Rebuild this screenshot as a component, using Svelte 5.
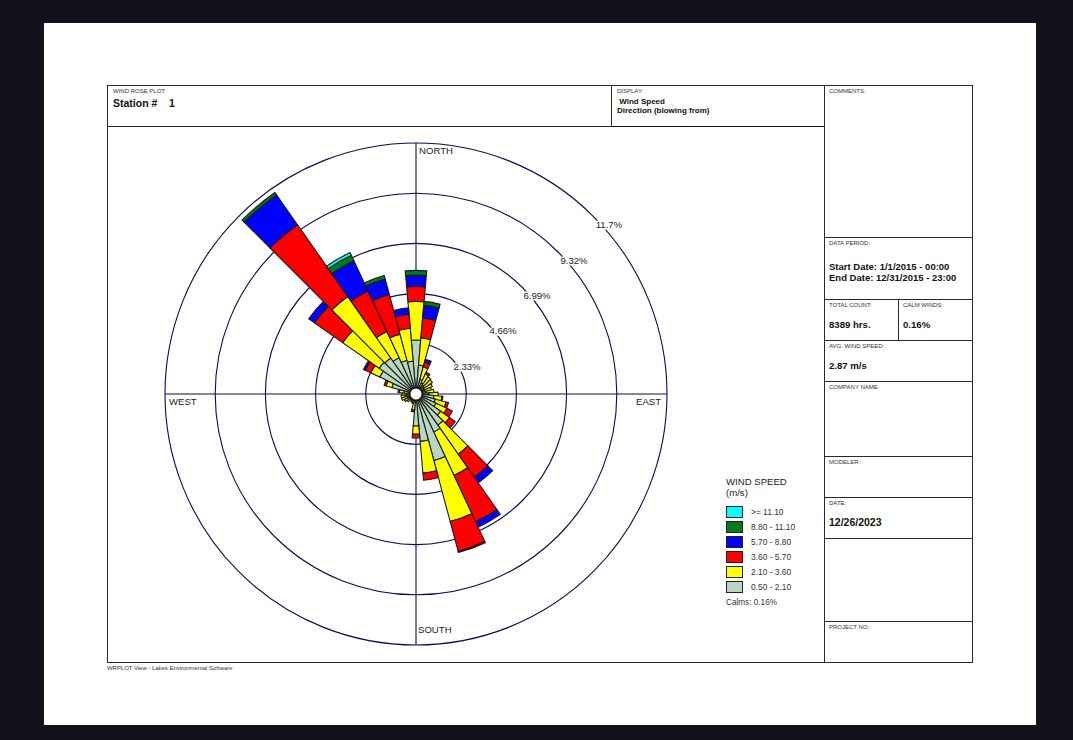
<script lang="ts">
  const cx = 308;
  const cy = 267;

  const colors = ['#b9d6bf', '#ffff00', '#ff0000', '#0000ff', '#007a1a', '#00ffff'];

  // direction, then the outer radius of each speed band, calmest first
  const sectors: [number, number[]][] = [
    [0, [54, 92.6, 107.6, 119, 123.6]],
    [10, [29, 56.5, 76, 89, 93]],
    [20, [15, 28, 33, 36]],
    [30, [12, 22, 24]],
    [40, [11, 21]],
    [50, [10, 20]],
    [60, [9, 18]],
    [70, [9, 16]],
    [80, [10, 18]],
    [90, [13, 22]],
    [100, [18, 26, 27]],
    [110, [20, 31, 33.7]],
    [120, [22, 34, 40]],
    [130, [30, 41, 48]],
    [140, [38, 73.5, 101.7, 108.5]],
    [150, [42, 90, 141, 147]],
    [160, [69, 132, 163, 164]],
    [170, [47.6, 79.4, 86.5]],
    [180, [32, 40.3, 44]],
    [190, [8, 16, 18]],
    [200, [6, 10]],
    [210, [6, 9]],
    [220, [6, 8]],
    [230, [7, 11]],
    [240, [8, 13]],
    [250, [9, 15]],
    [260, [10, 15]],
    [270, [10, 14]],
    [280, [12, 17, 18]],
    [290, [25, 31, 33]],
    [300, [40, 50, 56, 58]],
    [310, [45, 89.5, 124, 131]],
    [320, [44, 119, 206.6, 243, 246]],
    [330, [40, 69, 113.6, 147, 153, 156]],
    [340, [35, 62, 103, 119, 122.6]],
    [350, [33, 66, 80, 86.5]]
  ];

  function pt(r: number, deg: number) {
    const a = (deg * Math.PI) / 180;
    return `${(cx + r * Math.sin(a)).toFixed(2)} ${(cy - r * Math.cos(a)).toFixed(2)}`;
  }

  function band(dir: number, r0: number, r1: number) {
    const a = dir - 5;
    const b = dir + 5;
    return `M${pt(r0, a)} L${pt(r1, a)} A${r1} ${r1} 0 0 1 ${pt(r1, b)} L${pt(r0, b)} A${r0} ${r0} 0 0 0 ${pt(r0, a)} Z`;
  }

  const rings = [50.2, 100.4, 150.6, 200.8, 251];

  const ringLabels = [
    { text: '2.33%', x: 51, y: -24 },
    { text: '4.66%', x: 87, y: -60 },
    { text: '6.99%', x: 121, y: -95 },
    { text: '9.32%', x: 158, y: -130 },
    { text: '11.7%', x: 193, y: -166 }
  ];

  const legend = [
    { color: '#00ffff', label: '>= 11.10' },
    { color: '#007a1a', label: '8.80 - 11.10' },
    { color: '#0000ff', label: '5.70 - 8.80' },
    { color: '#ff0000', label: '3.60 - 5.70' },
    { color: '#ffff00', label: '2.10 - 3.60' },
    { color: '#b9d6bf', label: '0.50 - 2.10' }
  ];
</script>

<div class="page">
  <div class="sheet">
    <div class="frame">
      <div class="left">
        <div class="header">
          <div class="plot-title">
            <div class="label">WIND ROSE PLOT:</div>
            <div class="station">Station # &nbsp;&nbsp;&nbsp;1</div>
          </div>
          <div class="display">
            <div class="label">DISPLAY:</div>
            <div class="display-text"><span>&nbsp;Wind Speed</span><span>Direction (blowing from)</span></div>
          </div>
        </div>
        <div class="chart">
          <svg width="716" height="535" viewBox="0 0 716 535">
            {#each rings as r}
              <circle cx={cx} cy={cy} r={r} class="ring" />
            {/each}
            <line x1={cx} y1={cy - 251} x2={cx} y2={cy + 251} class="axis" />
            <line x1={cx - 251} y1={cy} x2={cx + 251} y2={cy} class="axis" />

            {#each sectors as [dir, radii]}
              {#each radii as r, i}
                <path d={band(dir, i === 0 ? 5 : radii[i - 1], r)} fill={colors[i]} class="wedge" />
              {/each}
            {/each}
            <circle cx={cx} cy={cy} r="6.3" class="hub" />

            {#each ringLabels as l}
              <text x={cx + l.x} y={cy + l.y} class="ring-label" text-anchor="middle">{l.text}</text>
            {/each}
            <text x={cx + 3} y={cy - 240} class="compass">NORTH</text>
            <text x={cx + 2} y={cy + 239} class="compass">SOUTH</text>
            <text x={cx - 247} y={cy + 11} class="compass">WEST</text>
            <text x={cx + 220} y={cy + 11} class="compass">EAST</text>
          </svg>

          <div class="legend">
            <div class="legend-title">WIND SPEED<br />(m/s)</div>
            {#each legend as item}
              <div class="legend-row">
                <span class="swatch" style="background: {item.color}"></span>
                <span>{item.label}</span>
              </div>
            {/each}
            <div class="calms">Calms: 0.16%</div>
          </div>
        </div>
      </div>

      <div class="side">
        <div class="cell comments"><div class="label">COMMENTS:</div></div>
        <div class="cell period">
          <div class="label">DATA PERIOD:</div>
          <div class="value period-value">Start Date: 1/1/2015 - 00:00<br />End Date: 12/31/2015 - 23:00</div>
        </div>
        <div class="split">
          <div class="cell">
            <div class="label">TOTAL COUNT:</div>
            <div class="value stat">8389 hrs.</div>
          </div>
          <div class="cell calm">
            <div class="label">CALM WINDS:</div>
            <div class="value stat">0.16%</div>
          </div>
        </div>
        <div class="cell avg">
          <div class="label">AVG. WIND SPEED:</div>
          <div class="value stat">2.87 m/s</div>
        </div>
        <div class="cell company"><div class="label">COMPANY NAME:</div></div>
        <div class="cell modeler"><div class="label">MODELER:</div></div>
        <div class="cell date">
          <div class="label">DATE:</div>
          <div class="value stat date-value">12/26/2023</div>
        </div>
        <div class="cell blank"></div>
        <div class="cell project"><div class="label">PROJECT NO.:</div></div>
      </div>
    </div>
    <div class="credit">WRPLOT View - Lakes Environmental Software</div>
  </div>
</div>

<style>
  :global(body) {
    margin: 0;
    background: #12121c;
  }

  .page {
    box-sizing: border-box;
    width: 1073px;
    height: 740px;
    padding: 23px 37px 15px 44px;
    background: #12121c;
    font-family: 'Liberation Sans', Arial, sans-serif;
    color: #111;
  }

  .sheet {
    box-sizing: border-box;
    height: 702px;
    padding: 62px 63px 0 63px;
    background: #fff;
  }

  .frame {
    box-sizing: border-box;
    display: flex;
    width: 866px;
    height: 578px;
    border: 1px solid #2a2a2a;
  }

  .left {
    width: 716px;
    display: flex;
    flex-direction: column;
  }

  .header {
    display: flex;
    height: 41px;
    border-bottom: 1px solid #2a2a2a;
  }

  .plot-title {
    box-sizing: border-box;
    width: 503px;
    padding: 2px 0 0 5px;
  }

  .display {
    flex: 1;
    padding: 2px 0 0 5px;
    border-left: 1px solid #2a2a2a;
    border-bottom: 1px solid #111;
    margin-bottom: -1px;
  }

  .label {
    font-size: 6px;
    line-height: 6px;
    color: #333;
  }

  .station {
    margin-top: 3px;
    font-size: 10.5px;
    line-height: 13px;
    font-weight: 700;
  }

  .display-text {
    display: flex;
    flex-direction: column;
    margin-top: 4px;
    font-size: 8px;
    line-height: 8.7px;
    font-weight: 700;
  }

  .chart {
    position: relative;
    flex: 1;
  }

  .chart svg {
    display: block;
  }

  .ring {
    fill: none;
    stroke: #0a0a5a;
    stroke-width: 1.1;
  }

  .axis {
    stroke: #0a0a5a;
    stroke-width: 1.1;
  }

  .wedge {
    stroke: #1a1a1a;
    stroke-width: 1.1;
  }

  .hub {
    fill: #fff;
    stroke: #111;
    stroke-width: 1.5;
  }

  .ring-label {
    font-size: 9.6px;
    fill: #222;
    stroke: #fff;
    stroke-width: 3px;
    paint-order: stroke;
  }

  .compass {
    font-size: 9.6px;
    fill: #222;
  }

  .legend {
    position: absolute;
    left: 618px;
    top: 349px;
    font-size: 7.8px;
    color: #333;
  }

  .legend-title {
    font-size: 9.6px;
    line-height: 11px;
    color: #222;
    margin-bottom: 6px;
  }

  .legend-row {
    display: flex;
    align-items: center;
    gap: 8px;
    height: 15px;
    font-size: 8.4px;
  }

  .swatch {
    box-sizing: border-box;
    width: 17px;
    height: 12px;
    border: 1px solid #222;
  }

  .calms {
    margin-top: 4px;
    font-size: 8.2px;
  }

  .side {
    flex: 1;
    display: flex;
    flex-direction: column;
    border-left: 1px solid #2a2a2a;
  }

  .cell {
    box-sizing: border-box;
    padding: 2px 0 0 4px;
    border-bottom: 1px solid #2a2a2a;
  }

  .value {
    font-weight: 700;
  }

  .comments { height: 152px; }
  .period { height: 62px; }
  .split {
    display: flex;
    height: 41px;
  }
  .split .cell { width: 73px; }
  .split .calm {
    flex: 1;
    border-left: 1px solid #2a2a2a;
  }
  .avg { height: 41px; }
  .company { height: 75px; }
  .modeler { height: 41px; }
  .date { height: 41px; }
  .blank { height: 83px; }
  .project {
    flex: 1;
    border-bottom: 0;
  }

  .period-value {
    margin-top: 15px;
    font-size: 9.5px;
    line-height: 11px;
  }

  .stat {
    margin-top: 11px;
    font-size: 9.6px;
    line-height: 12px;
  }

  .date-value {
    margin-top: 10px;
    font-size: 10.5px;
  }

  .credit {
    margin-top: 2px;
    font-size: 5.95px;
    line-height: 7px;
    color: #333;
  }
</style>
